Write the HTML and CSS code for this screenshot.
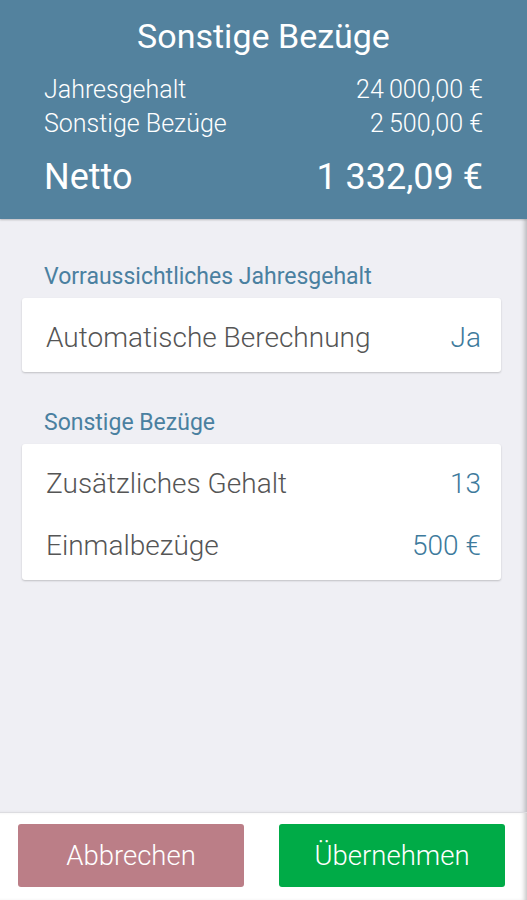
FILE: index.html
```html
<!DOCTYPE html>
<html lang="de">
  <head>
    <meta charset="UTF-8" />
    <meta name="viewport" content="width=device-width, initial-scale=1.0" />
    <title>Sonstige Bezüge</title>
    <link rel="stylesheet" href="styles.css">
  </head>
  <body>
    <div class="screen">
      <header class="summary">
        <h1 class="summary-title">Sonstige Bezüge</h1>
        <div class="summary-row">
          <span>Jahresgehalt</span>
          <span>24&#8201;000,00 €</span>
        </div>
        <div class="summary-row">
          <span>Sonstige Bezüge</span>
          <span>2&#8201;500,00 €</span>
        </div>
        <div class="summary-row netto">
          <span>Netto</span>
          <span>1 332,09 €</span>
        </div>
      </header>

      <main class="content">
        <p class="section-label">Vorraussichtliches Jahresgehalt</p>
        <div class="card">
          <div class="card-row">
            <span>Automatische Berechnung</span>
            <span class="value">Ja</span>
          </div>
        </div>

        <p class="section-label second">Sonstige Bezüge</p>
        <div class="card">
          <div class="card-row">
            <span>Zusätzliches Gehalt</span>
            <span class="value">13</span>
          </div>
          <div class="card-row">
            <span>Einmalbezüge</span>
            <span class="value">500 €</span>
          </div>
        </div>
      </main>

      <footer class="actions">
        <button class="btn btn-cancel">Abbrechen</button>
        <button class="btn btn-ok">Übernehmen</button>
      </footer>
    </div>
  </body>
</html>
```

FILE: styles.css
```css
body {
  margin: 0;
  font-family: Roboto, "Noto Sans", sans-serif;
}

.screen {
  display: flex;
  flex-direction: column;
  height: 900px;
  background: #efeff4;
}

/* header */
.summary {
  background: #53829e;
  color: #fff;
  padding: 15px 44px 20px;
  box-shadow: 0 1px 2px rgba(0, 0, 0, 0.2);
  position: relative;
  z-index: 1;
}

.summary-title {
  margin: 0 0 16px;
  font-size: 34px;
  font-weight: 400;
  line-height: 42px;
  text-align: center;
}

.summary-row {
  display: flex;
  justify-content: space-between;
  font-size: 25px;
  font-weight: 300;
  line-height: 34px;
}

.summary-row.netto {
  margin-top: 14px;
  font-size: 36px;
  font-weight: 400;
  line-height: 44px;
}

/* content */
.content {
  flex: 1;
  padding: 44px 26px 0 22px;
  box-shadow: inset -5px 0 5px -3px rgba(0, 0, 0, 0.25);
}

.section-label {
  margin: 0 0 7px 22px;
  font-size: 23px;
  line-height: 28px;
  color: #4a80a0;
}

.section-label.second {
  margin-top: 37px;
}

.card {
  background: #fff;
  border-radius: 3px;
  box-shadow: 0 1px 2px rgba(0, 0, 0, 0.2);
  padding: 8px 0 4px;
}

.card-row {
  display: flex;
  justify-content: space-between;
  align-items: center;
  height: 62px;
  padding: 0 20px 0 24px;
  font-size: 28px;
  font-weight: 300;
  color: #555;
}

.card-row .value {
  color: #3d7a9c;
}

/* footer */
.actions {
  display: flex;
  gap: 35px;
  padding: 11px 22px 13px 18px;
  background: #fff;
  border-top: 1px solid #dcdce0;
  box-shadow: inset -5px 0 5px -3px rgba(0, 0, 0, 0.25);
}

.btn {
  flex: 1;
  height: 63px;
  border: none;
  border-radius: 3px;
  color: #fff;
  font-family: inherit;
  font-size: 27.5px;
  font-weight: 300;
}

.btn-cancel {
  background: #bb7e87;
}

.btn-ok {
  background: #00ab47;
}
```
